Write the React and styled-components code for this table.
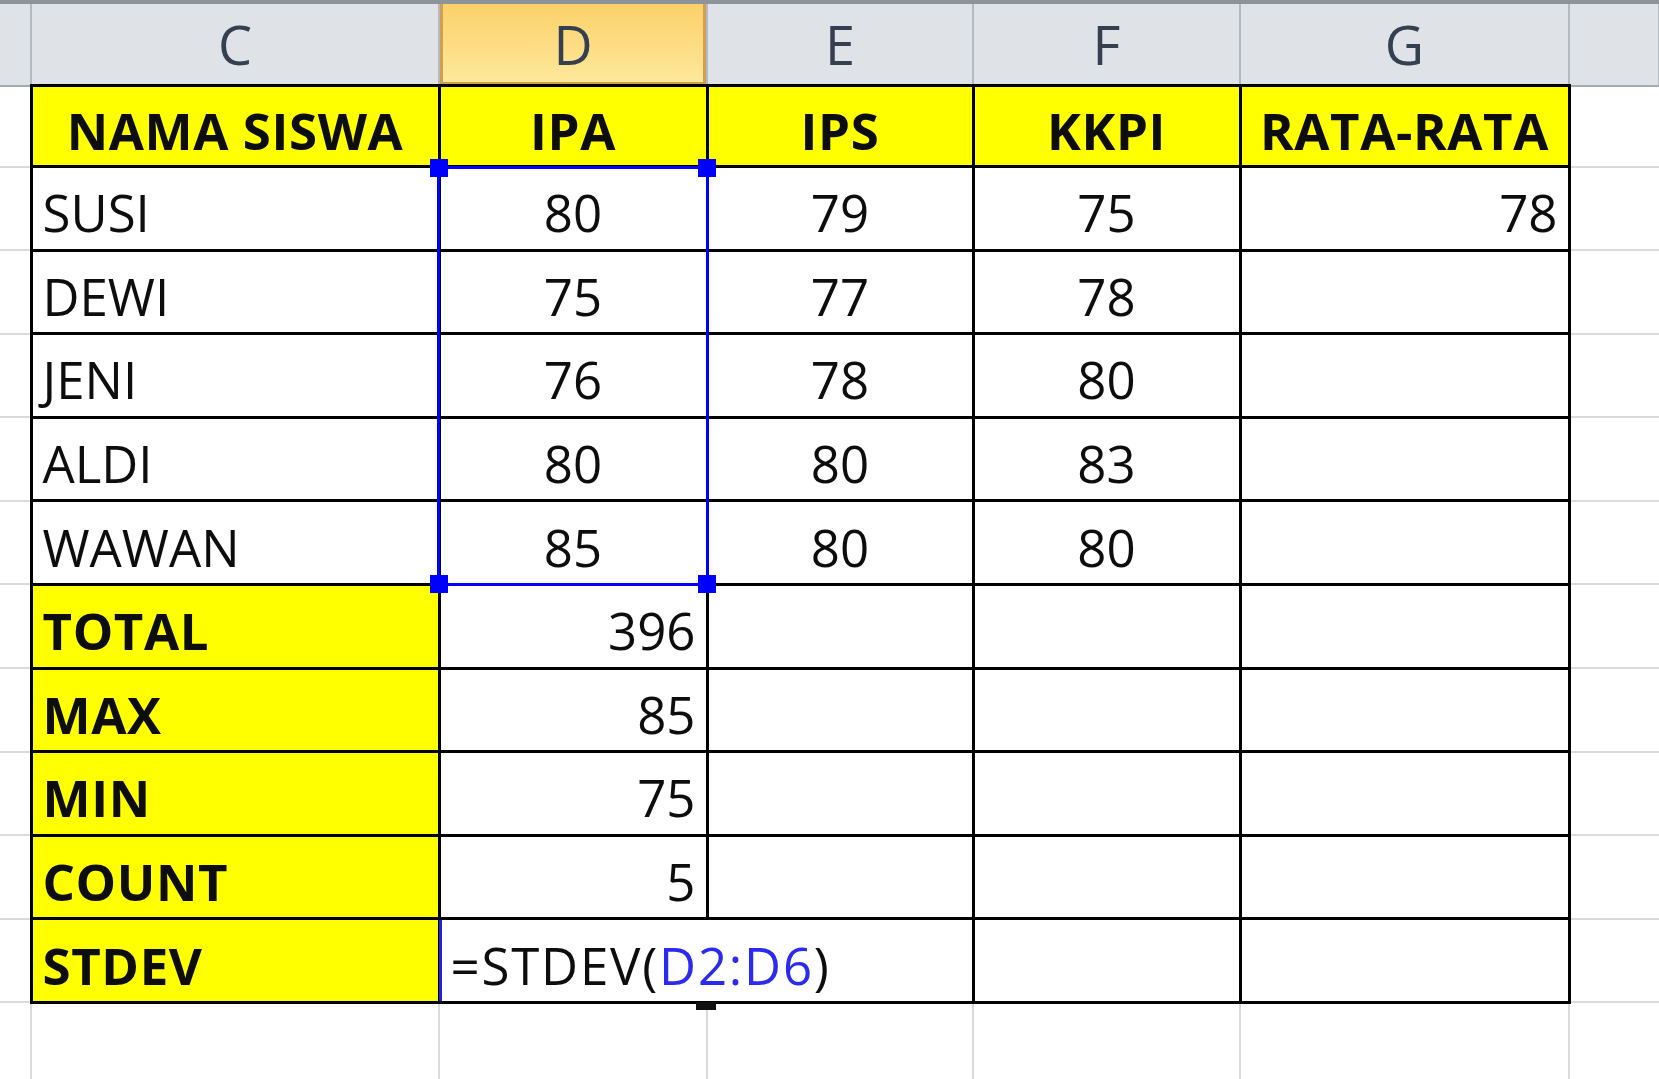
import React from "react";
import styled, { createGlobalStyle } from "styled-components";

const Global = createGlobalStyle`
  html, body { margin: 0; padding: 0; background: #fff; overflow: hidden; }
  body { font-family: "Open Sans", "Liberation Sans", sans-serif; }
`;

const COLS = [31, 408, 268, 266, 267, 329, 90];
const LETTERS = ["", "C", "D", "E", "F", "G", ""];

const Frame = styled.div`
  position: relative;
  width: 1659px;
  height: 1079px;
  overflow: hidden;
`;

const Sheet = styled.table`
  border-collapse: collapse;
  table-layout: fixed;
  width: 1659px;
  font-family: "Open Sans", "Liberation Sans", sans-serif;
`;

const ColHead = styled.th`
  height: 80px;
  padding: 0;
  font-size: 54px;
  font-weight: 400;
  color: #34404f;
  text-align: center;
  vertical-align: middle;
  border-top: 4px solid #8e939a;
  border-right: 2px solid #b3b9c1;
  border-bottom: 2px solid #a5abb3;
  background: ${(p) =>
    p.$active ? "linear-gradient(#fcd06a, #fee99c)" : "#dfe2e7"};
  box-shadow: ${(p) =>
    p.$active ? "inset 3px 0 #d19e52, inset -3px 0 #d19e52, inset 0 -2px #d19e52" : "none"};
`;

const Row = styled.tr`
  height: ${(p) => p.$h}px;
`;

const Cell = styled.td`
  padding: 9px 10px 0;
  font-size: 51px;
  line-height: 1;
  color: #0d0d0d;
  white-space: nowrap;
  overflow: visible;
  vertical-align: middle;
  text-align: ${(p) => p.$align || "left"};
  font-weight: ${(p) => (p.$bold ? 700 : 400)};
  letter-spacing: ${(p) => (p.$bold ? "0.6px" : "0")};
  background: ${(p) => (p.$fill ? "#ffff00" : "#fff")};
  border: 3px solid #000;
`;

const EditCell = styled(Cell)`
  position: relative;
  z-index: 2;
  letter-spacing: 1.8px;
  border-right-style: hidden;
  background: transparent;
  &::before {
    content: "";
    position: absolute;
    left: -2px;
    top: 0;
    bottom: 0;
    width: 3px;
    background: #1f1fe6;
  }
`;

const GridCell = styled.td`
  padding: 0;
  background: #fff;
  border: none;
  border-bottom: ${(p) => (p.$last ? "none" : "2px solid #dadada")};
  border-right: ${(p) => (p.$vline ? "2px solid #dadada" : "none")};
`;

const Ref = styled.span`
  color: #2a2af0;
`;

const Selection = styled.div`
  position: absolute;
  left: 437px;
  top: 166px;
  width: 266px;
  height: 414px;
  border: 3px solid #0000ff;
  pointer-events: none;
`;

const Handle = styled.span`
  position: absolute;
  width: 18px;
  height: 18px;
  background: #0000ff;
  ${(p) => (p.$top ? "top: -10px;" : "bottom: -10px;")}
  ${(p) => (p.$left ? "left: -10px;" : "right: -10px;")}
`;

const FillHandle = styled.div`
  position: absolute;
  left: 696px;
  top: 1002px;
  width: 20px;
  height: 8px;
  background: #111;
  z-index: 3;
`;

const students = [
  ["SUSI", 80, 79, 75, 78],
  ["DEWI", 75, 77, 78, ""],
  ["JENI", 76, 78, 80, ""],
  ["ALDI", 80, 80, 83, ""],
  ["WAWAN", 85, 80, 80, ""],
];

const summary = [
  ["TOTAL", "396"],
  ["MAX", "85"],
  ["MIN", "75"],
  ["COUNT", "5"],
];

export default function App() {
  return (
    <>
      <Global />
      <Frame>
        <Sheet>
          <colgroup>
            {COLS.map((w, i) => (
              <col key={i} style={{ width: w }} />
            ))}
          </colgroup>
          <thead>
            <tr>
              {LETTERS.map((l, i) => (
                <ColHead key={i} $active={l === "D"}>
                  {l}
                </ColHead>
              ))}
            </tr>
          </thead>
          <tbody>
            <Row $h={81}>
              <GridCell />
              <Cell $fill $bold $align="center">NAMA SISWA</Cell>
              <Cell $fill $bold $align="center">IPA</Cell>
              <Cell $fill $bold $align="center">IPS</Cell>
              <Cell $fill $bold $align="center">KKPI</Cell>
              <Cell $fill $bold $align="center">RATA-RATA</Cell>
              <GridCell />
            </Row>
            {students.map(([name, ipa, ips, kkpi, avg]) => (
              <Row $h={83.6} key={name}>
                <GridCell />
                <Cell>{name}</Cell>
                <Cell $align="center">{ipa}</Cell>
                <Cell $align="center">{ips}</Cell>
                <Cell $align="center">{kkpi}</Cell>
                <Cell $align="right">{avg}</Cell>
                <GridCell />
              </Row>
            ))}
            {summary.map(([label, val]) => (
              <Row $h={83.6} key={label}>
                <GridCell />
                <Cell $fill $bold>{label}</Cell>
                <Cell $align="right">{val}</Cell>
                <Cell />
                <Cell />
                <Cell />
                <GridCell />
              </Row>
            ))}
            <Row $h={83.6}>
              <GridCell />
              <Cell $fill $bold>STDEV</Cell>
              <EditCell>
                =STDEV(<Ref>D2:D6</Ref>)
              </EditCell>
              <Cell />
              <Cell />
              <Cell />
              <GridCell />
            </Row>
            <Row $h={80}>
              <GridCell $last $vline />
              <GridCell $last $vline />
              <GridCell $last $vline />
              <GridCell $last $vline />
              <GridCell $last $vline />
              <GridCell $last $vline />
              <GridCell $last />
            </Row>
          </tbody>
        </Sheet>
        <Selection>
          <Handle $top $left />
          <Handle $top />
          <Handle $left />
          <Handle />
        </Selection>
        <FillHandle />
      </Frame>
    </>
  );
}
